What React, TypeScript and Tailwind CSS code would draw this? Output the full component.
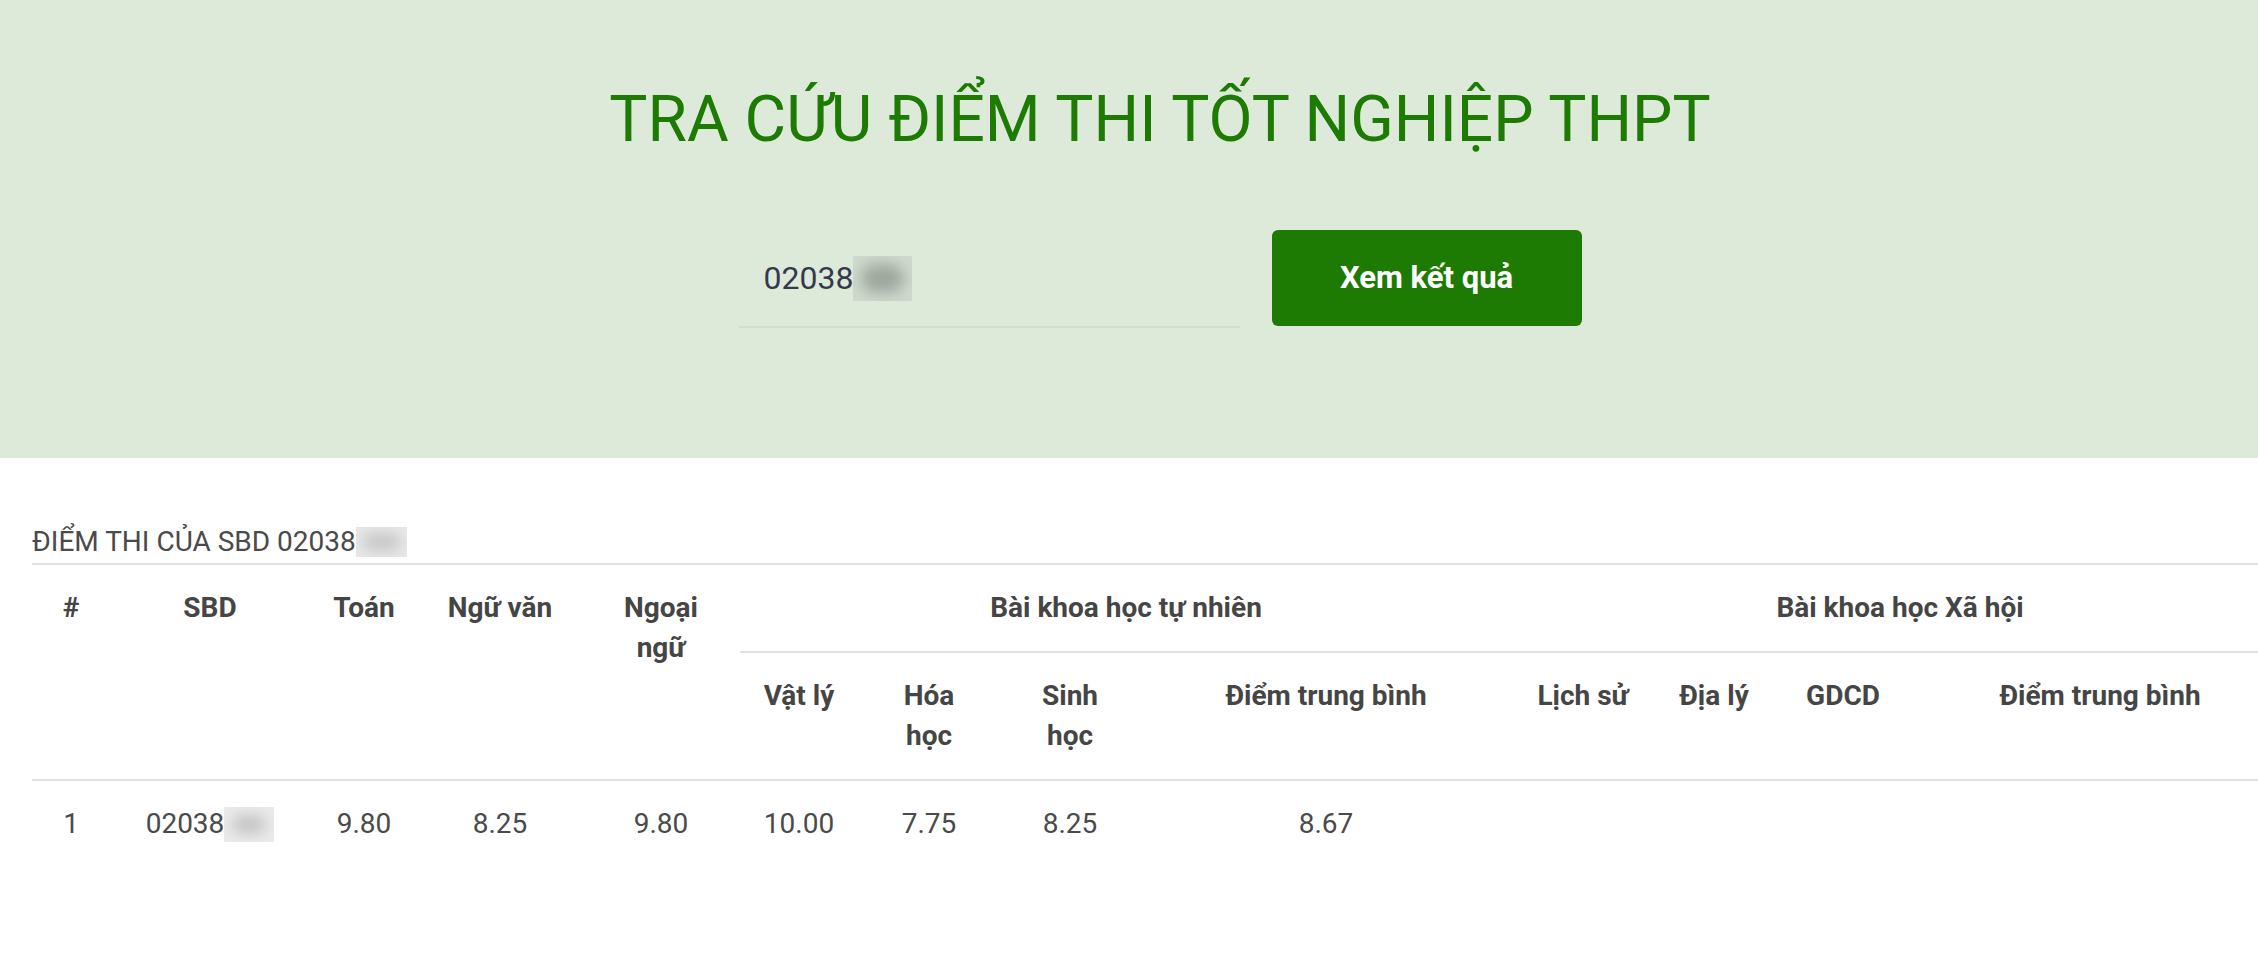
import React from "react";

const th =
  "border-t-2 border-[#dee2e6] px-[21px] py-[23px] text-center align-top text-[28px] leading-[40px] font-bold text-[#454545] whitespace-nowrap";
const thLast =
  "border-t-2 border-b-2 border-[#dee2e6] px-[21px] py-[23px] text-center align-top text-[28px] leading-[40px] font-bold text-[#454545] whitespace-nowrap";
const td =
  "border-t-2 border-[#dee2e6] px-[21px] py-[23px] text-center align-top text-[28px] leading-[40px] text-[#4a4a4a] whitespace-nowrap";

const widths = [78, 200, 108, 164, 158, 118, 142, 140, 372, 142, 120, 138, 376];

const App = () => {
  return (
    <div className="w-full min-h-screen overflow-hidden bg-white font-['Roboto',sans-serif]">
      <div className="w-[2320px]">
        {/* HEADER */}
        <div className="flex flex-col items-center bg-[#deead9] pt-[81px] pb-[130px]">
          <h1 className="text-[64px] leading-[77px] font-normal text-[#1d7a02]">
            TRA CỨU ĐIỂM THI TỐT NGHIỆP THPT
          </h1>
          <div className="mt-[72px] flex items-start gap-[32px]">
            <div className="flex h-[98px] w-[501px] items-center border-b-2 border-[#d3dccf] pl-[25px] text-[32px] text-[#343a4e]">
              <span>02038</span>
              <span className="relative inline-block h-[45px] w-[59px] overflow-hidden bg-[#d0d9cd]">
                <span className="absolute inset-[8px] rounded-full bg-[#9ea89d] blur-[7px]"></span>
              </span>
            </div>
            <button className="h-[96px] w-[310px] rounded-[6px] bg-[#1d7a02] text-[31px] font-bold text-white">
              Xem kết quả
            </button>
          </div>
        </div>

        {/* RESULT */}
        <div className="px-[32px] pt-[63px]">
          <h2 className="flex items-center text-[28px] leading-[42px] font-normal text-[#4a4a4a]">
            <span>ĐIỂM THI CỦA SBD 02038</span>
            <span className="relative inline-block h-[30px] w-[51px] overflow-hidden bg-[#e8e8e8]">
              <span className="absolute inset-[7px] rounded-full bg-[#c4c4c4] blur-[7px]"></span>
            </span>
          </h2>
          <table className="w-[2256px] table-fixed border-collapse">
            <colgroup>
              {widths.map((w, i) => (
                <col key={i} style={{ width: w }} />
              ))}
            </colgroup>
            <thead>
              <tr>
                <th rowSpan={2} className={thLast}>#</th>
                <th rowSpan={2} className={thLast}>SBD</th>
                <th rowSpan={2} className={thLast}>Toán</th>
                <th rowSpan={2} className={thLast}>Ngữ văn</th>
                <th rowSpan={2} className={thLast}>
                  Ngoại
                  <br />
                  ngữ
                </th>
                <th colSpan={4} className={th}>Bài khoa học tự nhiên</th>
                <th colSpan={4} className={th}>Bài khoa học Xã hội</th>
              </tr>
              <tr>
                <th className={thLast}>Vật lý</th>
                <th className={thLast}>
                  Hóa
                  <br />
                  học
                </th>
                <th className={thLast}>
                  Sinh
                  <br />
                  học
                </th>
                <th className={thLast}>Điểm trung bình</th>
                <th className={thLast}>Lịch sử</th>
                <th className={thLast}>Địa lý</th>
                <th className={thLast}>GDCD</th>
                <th className={thLast}>Điểm trung bình</th>
              </tr>
            </thead>
            <tbody>
              <tr>
                <td className={td}>1</td>
                <td className={td}>
                  <span className="inline-flex items-center">
                    <span>02038</span>
                    <span className="relative inline-block h-[35px] w-[50px] overflow-hidden bg-[#ebebeb]">
                      <span className="absolute inset-[8px] rounded-full bg-[#c4c4c4] blur-[7px]"></span>
                    </span>
                  </span>
                </td>
                <td className={td}>9.80</td>
                <td className={td}>8.25</td>
                <td className={td}>9.80</td>
                <td className={td}>10.00</td>
                <td className={td}>7.75</td>
                <td className={td}>8.25</td>
                <td className={td}>8.67</td>
                <td className={td}></td>
                <td className={td}></td>
                <td className={td}></td>
                <td className={td}></td>
              </tr>
            </tbody>
          </table>
        </div>
      </div>
    </div>
  );
};

export default App;
